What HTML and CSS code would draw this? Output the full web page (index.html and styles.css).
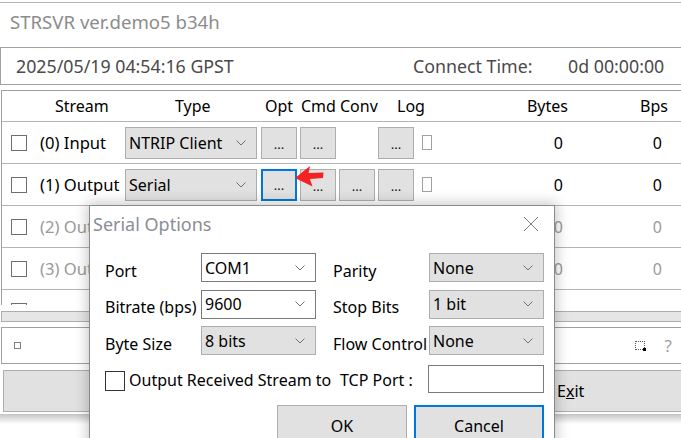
FILE: index.html
```html
<!DOCTYPE html>
<html>
<head>
<meta charset="utf-8">
<title>STRSVR</title>
<link rel="stylesheet" href="styles.css">
</head>
<body>
<div class="topline"></div>
<div class="title">STRSVR ver.demo5 b34h</div>
<div class="status">
  <span class="time">2025/05/19 04:54:16 GPST</span>
  <span class="ct-label">Connect Time:</span>
  <span class="ct-val">0d 00:00:00</span>
</div>

<div class="table">
  <div class="row head">
    <span class="h-stream">Stream</span>
    <span class="h-type">Type</span>
    <span class="h-opt">Opt</span>
    <span class="h-cmd">Cmd</span>
    <span class="h-conv">Conv</span>
    <span class="h-log">Log</span>
    <span class="h-bytes">Bytes</span>
    <span class="h-bps">Bps</span>
  </div>
  <div class="row">
    <span class="cb"></span><span class="name">(0) Input</span>
    <div class="combo gray"><span>NTRIP Client</span><svg class="chev" width="10" height="6" viewBox="0 0 10 6"><path d="M0.5 0.5 L5 5 L9.5 0.5" fill="none" stroke="#707070" stroke-width="1"/></svg></div>
    <span class="btn">...</span><span class="btn">...</span><span class="btn empty"></span><span class="btn log">...</span>
    <span class="ind"></span>
    <span class="bytes">0</span><span class="bps">0</span>
  </div>
  <div class="row">
    <span class="cb"></span><span class="name">(1) Output</span>
    <div class="combo gray"><span>Serial</span><svg class="chev" width="10" height="6" viewBox="0 0 10 6"><path d="M0.5 0.5 L5 5 L9.5 0.5" fill="none" stroke="#707070" stroke-width="1"/></svg></div>
    <span class="btn focus">...</span><span class="btn">...</span><span class="btn">...</span><span class="btn log">...</span>
    <span class="ind"></span>
    <span class="bytes">0</span><span class="bps">0</span>
  </div>
  <div class="row dis">
    <span class="cb"></span><span class="name">(2) Output</span>
    <div class="combo gray"><span></span></div>
    <span class="btn"></span><span class="btn"></span><span class="btn"></span><span class="btn log"></span>
    <span class="ind"></span>
    <span class="bytes">0</span><span class="bps">0</span>
  </div>
  <div class="row dis">
    <span class="cb"></span><span class="name">(3) Output</span>
    <div class="combo gray"><span></span></div>
    <span class="btn"></span><span class="btn"></span><span class="btn"></span><span class="btn log"></span>
    <span class="ind"></span>
    <span class="bytes">0</span><span class="bps">0</span>
  </div>
  <div class="row dis">
    <span class="cb"></span><span class="name">(4) Output</span>
  </div>
</div>

<div class="hscroll"></div>

<div class="panel">
  <span class="sq"></span>
  <span class="dotsq"><i></i></span>
  <span class="help">?</span>
</div>

<div class="btnrow">
  <span class="bigbtn left"></span>
  <span class="bigbtn exit">E<u>x</u>it</span>
</div>
<div class="shadow"></div>

<svg class="arrow" width="30" height="21" viewBox="0 0 30 21"><polygon points="0,12 15,0 13.5,7 28.5,6.5 28,12 15,13 17.5,20.5" fill="#f52222"/></svg>

<div class="dialog">
  <div class="dlg-head">
    <span class="dlg-title">Serial Options</span>
    <svg class="close" width="16" height="16" viewBox="0 0 16 16"><path d="M1 1 L15 15 M15 1 L1 15" stroke="#7a7a7a" stroke-width="1" fill="none"/></svg>
  </div>
  <div class="form">
    <span class="lbl">Port</span>
    <div class="combo white"><span>COM1</span><svg class="chev" width="10" height="6" viewBox="0 0 10 6"><path d="M0.5 0.5 L5 5 L9.5 0.5" fill="none" stroke="#707070" stroke-width="1"/></svg></div>
    <span></span>
    <span class="lbl">Parity</span>
    <div class="combo gray"><span>None</span><svg class="chev" width="10" height="6" viewBox="0 0 10 6"><path d="M0.5 0.5 L5 5 L9.5 0.5" fill="none" stroke="#707070" stroke-width="1"/></svg></div>

    <span class="lbl">Bitrate (bps)</span>
    <div class="combo white"><span>9600</span><svg class="chev" width="10" height="6" viewBox="0 0 10 6"><path d="M0.5 0.5 L5 5 L9.5 0.5" fill="none" stroke="#707070" stroke-width="1"/></svg></div>
    <span></span>
    <span class="lbl">Stop Bits</span>
    <div class="combo gray"><span>1 bit</span><svg class="chev" width="10" height="6" viewBox="0 0 10 6"><path d="M0.5 0.5 L5 5 L9.5 0.5" fill="none" stroke="#707070" stroke-width="1"/></svg></div>

    <span class="lbl">Byte Size</span>
    <div class="combo gray"><span>8 bits</span><svg class="chev" width="10" height="6" viewBox="0 0 10 6"><path d="M0.5 0.5 L5 5 L9.5 0.5" fill="none" stroke="#707070" stroke-width="1"/></svg></div>
    <span></span>
    <span class="lbl">Flow Control</span>
    <div class="combo gray"><span>None</span><svg class="chev" width="10" height="6" viewBox="0 0 10 6"><path d="M0.5 0.5 L5 5 L9.5 0.5" fill="none" stroke="#707070" stroke-width="1"/></svg></div>
  </div>
  <div class="tcprow">
    <span class="bigcb"></span>
    <span class="orecv">Output Received Stream to</span>
    <span class="tcplbl">TCP Port :</span>
    <span class="input"></span>
  </div>
  <div class="okrow">
    <span class="dbtn">OK</span>
    <span class="dbtn cancel">Cancel</span>
  </div>
</div>
</body>
</html>
```

FILE: styles.css
```css
* { box-sizing: border-box; }
html, body { margin: 0; padding: 0; }
body {
  width: 681px;
  height: 438px;
  overflow: hidden;
  background: #fff;
  font-family: "Noto Sans", "DejaVu Sans", sans-serif;
  color: #000;
  position: relative;
}
.topline { height: 3px; border-bottom: 1px solid #b4b4b4; }
.title {
  height: 44px;
  line-height: 38px;
  padding-left: 10px;
  font-size: 18.6px;
  color: #8c8c8c;
}
.status {
  height: 38px;
  border: 1px solid #a0a0a0;
  border-right: none;
  display: flex;
  align-items: center;
  font-size: 17.8px;
  color: #4a4a4a;
  white-space: nowrap;
}
.status .time { margin-left: 15px; width: 397px; }
.status .ct-label { width: 155px; }

.table {
  margin-top: 5px;
  margin-left: 1px;
  height: 215px;
  border-top: 1px solid #a0a0a0;
  border-left: 1px solid #a0a0a0;
  overflow: hidden;
}
.row {
  display: flex;
  align-items: center;
  height: 42px;
  flex-shrink: 0;
  border-bottom: 1px solid #b4b4b4;
  padding-left: 9px;
  font-size: 16px;
  white-space: nowrap;
}
.row.head { height: 31px; padding-left: 53px; }
.h-stream { width: 120px; }
.h-type { width: 90px; }
.h-opt { width: 36px; }
.h-cmd { width: 39px; }
.h-conv { width: 57px; }
.h-log { width: 30px; }
.h-bytes { width: 141px; text-align: right; }
.h-bps { width: 100px; text-align: right; }

.cb {
  width: 16px; height: 16px;
  border: 1px solid #6e6e6e;
  background: #fff;
  margin-right: 13px;
  flex-shrink: 0;
}
.name { width: 85px; flex-shrink: 0; overflow: hidden; font-size: 16.6px; }
.combo {
  display: flex;
  align-items: center;
  justify-content: space-between;
  padding: 0 10px 0 3px;
  flex-shrink: 0;
}
.row .combo { width: 132px; height: 32px; margin-right: 4px; }
.combo.gray { background: #e1e1e1; border: 1px solid #adadad; }
.combo.white { background: #fff; border: 1px solid #7a7a7a; }
.btn {
  width: 36px; height: 32px;
  margin-right: 3px;
  background: #e1e1e1;
  border: 1px solid #adadad;
  font-size: 13px;
  line-height: 32px;
  text-align: center;
  color: #111;
  flex-shrink: 0;
}
.btn.empty { visibility: hidden; }
.btn.focus { border: 2px solid #0078d7; line-height: 28px; }
.btn.log { margin-right: 8px; }
.ind {
  width: 10px; height: 15px;
  border: 1px solid #a0a0a0;
  flex-shrink: 0;
}
.bytes { width: 131px; text-align: right; flex-shrink: 0; }
.bps { width: 99px; text-align: right; flex-shrink: 0; }
.row.dis { color: #9a9a9a; }

.hscroll {
  margin-top: 6px;
  margin-left: 1px;
  height: 11px;
  background: #e6e6e6;
  border: 1px solid #adadad;
  border-right: none;
}
.panel {
  margin-top: 5px;
  margin-left: 1px;
  height: 37px;
  border: 1px solid #a0a0a0;
  border-right: none;
  display: flex;
  align-items: center;
}
.sq {
  width: 7px; height: 7px;
  border: 1px solid #808080;
  margin-left: 12px;
}
.dotsq {
  position: relative;
  width: 10px; height: 9px;
  border: 1px dotted #555;
  margin-left: auto;
}
.dotsq i {
  position: absolute;
  right: -2px; bottom: -2px;
  width: 3px; height: 3px;
  background: #000;
}
.help {
  font-size: 17px;
  color: #a0a0a0;
  margin-left: 20px;
  margin-right: 9px;
}
.btnrow {
  margin-top: 6px;
  display: flex;
  gap: 4px;
  padding-left: 3px;
}
.bigbtn {
  height: 42px;
  background: #e1e1e1;
  border: 1px solid #adadad;
  font-size: 16px;
  line-height: 40px;
  text-align: center;
}
.bigbtn.left { width: 453px; }
.bigbtn.exit { width: 222px; border-right: none; }
.shadow {
  margin-top: 2px;
  height: 10px;
  background: linear-gradient(#c4c4c4, #fff);
}

.arrow { position: absolute; left: 295px; top: 166px; }

.dialog {
  position: absolute;
  left: 89px;
  top: 205px;
  width: 466px;
  height: 250px;
  background: #fff;
  border: 1px solid #8a8a8a;
  box-shadow: 0 0 12px 2px rgba(0, 0, 0, 0.22);
}
.dlg-head {
  height: 47px;
  display: flex;
  align-items: flex-start;
}
.dlg-title {
  padding-left: 3px;
  font-size: 18px;
  line-height: 36px;
  color: #8a8e96;
}
.close { margin-left: auto; margin-right: 15px; margin-top: 10px; }
.form {
  display: grid;
  grid-template-columns: 96px 115px 17px 96px 115px;
  grid-auto-rows: 29px;
  row-gap: 7.5px;
  padding-left: 15px;
  font-size: 16px;
  align-items: center;
}
.form .combo { height: 29px; }
.lbl { white-space: nowrap; padding-top: 6px; }
.tcprow {
  margin-top: 10px;
  height: 28px;
  display: flex;
  align-items: center;
  padding-left: 15px;
  font-size: 16px;
  white-space: nowrap;
}
.bigcb {
  width: 20px; height: 20px;
  border: 1px solid #333;
  margin-right: 4px;
  margin-top: 4px;
}
.orecv { width: 211px; padding-top: 2px; }
.tcplbl { width: 88px; padding-top: 2px; }
.input {
  width: 116px; height: 28px;
  border: 1px solid #7a7a7a;
}
.okrow {
  margin-top: 12px;
  display: flex;
  gap: 7px;
  padding-left: 187px;
}
.dbtn {
  width: 130px; height: 42px;
  background: #e1e1e1;
  border: 1px solid #adadad;
  text-align: center;
  font-size: 16px;
  line-height: 40px;
}
.dbtn.cancel { border: 2px solid #0078d7; line-height: 38px; }
```
